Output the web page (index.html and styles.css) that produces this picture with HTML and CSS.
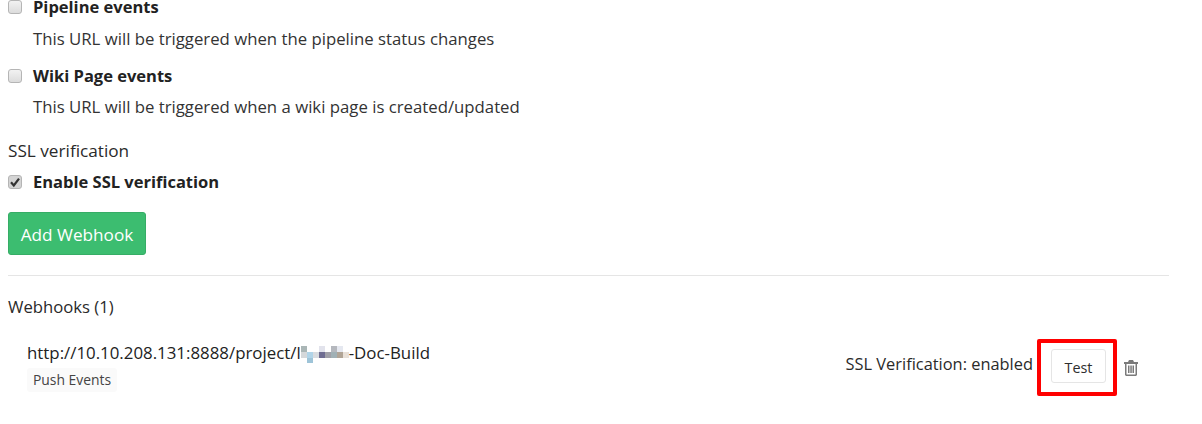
FILE: index.html
```html
<!DOCTYPE html>
<html lang="en">
<head>
<meta charset="utf-8">
<title>Webhooks</title>
<link rel="stylesheet" href="styles.css">
</head>
<body>
<main class="page">
  <div class="option">
    <label class="check-row"><span class="box"></span><strong>Pipeline events</strong></label>
    <p class="help">This URL will be triggered when the pipeline status changes</p>
  </div>
  <div class="option">
    <label class="check-row"><span class="box"></span><strong>Wiki Page events</strong></label>
    <p class="help tight">This URL will be triggered when a wiki page is created/updated</p>
  </div>
  <div class="ssl-title">SSL verification</div>
  <label class="check-row ssl-row"><span class="box checked"><svg viewBox="0 0 14 14" width="14" height="14"><path d="M3 7.200 5.800 10.400 11 3.600" fill="none" stroke="#333" stroke-width="2.200"/></svg></span><strong>Enable SSL verification</strong></label>
  <button class="add-btn" type="button">Add Webhook</button>
  <hr class="rule">
  <div class="list-title">Webhooks (1)</div>
  <div class="hook">
    <div class="hook-info">
      <div class="hook-url">http://10.10.208.131:8888/project/l<svg class="blur" width="48" height="18" viewBox="0 0 48 18"><rect x="0" y="0" width="6" height="6" fill="#aab6b6"/><rect x="18" y="0" width="6" height="6" fill="#e2e3ec"/><rect x="30" y="0" width="6" height="6" fill="#b5b8be"/><rect x="36" y="0" width="6" height="6" fill="#e5e8f0"/><rect x="0" y="6" width="6" height="6" fill="#d5d8da"/><rect x="6" y="6" width="6" height="6" fill="#b0d4e8"/><rect x="12" y="6" width="6" height="6" fill="#d8dce0"/><rect x="18" y="6" width="6" height="6" fill="#6f6d92"/><rect x="24" y="6" width="6" height="6" fill="#a0a0a8"/><rect x="30" y="6" width="6" height="6" fill="#a0b0b5"/><rect x="36" y="6" width="6" height="6" fill="#b0a496"/><rect x="42" y="6" width="6" height="6" fill="#e8e0d8"/><rect x="6" y="12" width="6" height="5" fill="#9ec4d8"/></svg>-Doc-Build</div>
      <span class="tag">Push Events</span>
    </div>
    <div class="hook-actions">
      <span class="ssl-status">SSL Verification: enabled</span>
      <span class="highlight"><button class="test-btn" type="button">Test</button></span>
      <svg class="trash" width="14" height="16" viewBox="0 0 14 16"><path fill="#7a7a7a" d="M5 0h4l1 2h4v2h-1v11l-1 1H2l-1-1V4H0V2h4zM2.500 4v10.500h9V4zM4 5.500h1.500v7.500H4zM6.300 5.500h1.500v7.500H6.300zM8.500 5.500H10v7.500H8.500z"/></svg>
    </div>
  </div>
</main>
</body>
</html>
```
FILE: styles.css
```css
* { box-sizing: border-box; }
html, body { margin: 0; padding: 0; }
body {
  height: 424px;
  overflow: hidden;
  background: #fff;
  color: #2a2a2a;
  font-family: "Open Sans", "Noto Sans", sans-serif;
  font-size: 16.7px;
  line-height: 22px;
}
.page { width: 1169px; margin-top: -4px; padding-left: 8px; }
.option { margin-bottom: 15px; }
.check-row { display: flex; align-items: center; height: 22px; }
.check-row strong { font-size: 16.500px; font-weight: 700; color: #222; }
.box {
  width: 14px; height: 14px; margin-right: 11px;
  border: 1px solid #b5b5b5; border-radius: 3px;
  background: linear-gradient(#f2f2f2, #dcdcdc);
  display: flex; flex: none;
}
.box.checked { background: #d4d4d4; }
.box.checked svg { margin: -1px; flex: none; }
.help { margin: 10px 0 0 25px; font-size: 16.750px; color: #333; }
.help.tight { margin-top: 9px; }
.ssl-title { margin-top: 22px; font-size: 17.200px; }
.ssl-row { margin-top: 9px; }
.add-btn {
  display: block; margin-top: 19px; padding: 2px 0 0;
  width: 138px; height: 43px;
  background: #3cbd70; color: #fff;
  border: 1px solid #36ad66; border-radius: 3px;
  font: inherit; font-size: 17.200px;
}
.rule { margin: 20px 0 0; border: 0; border-top: 1px solid #e5e5e5; }
.list-title { margin-top: 20px; }
.hook { display: flex; justify-content: space-between; align-items: flex-start; margin-top: 24px; padding: 0 31px 0 19px; }
.hook-url { font-size: 16.850px; color: #222; }
.blur { vertical-align: -5px; }
.tag {
  display: inline-block; margin-top: 4px; padding: 0 6px;
  height: 24px; font-size: 13.900px; line-height: 24px;
  background: #fafafa; border-radius: 3px; color: #444;
}
.hook-actions { display: flex; align-items: flex-start; margin-top: -3px; }
.ssl-status { margin-top: 14px; font-size: 16.400px; }
.highlight {
  display: flex; margin: 0 7px 0 4px;
  border: 4px solid #f00; border-radius: 2px; padding: 6px 7px 9px 10px;
}
.test-btn {
  width: 55px; height: 34px; padding: 4px 0 0;
  background: #fff; border: 1px solid #e5e5e5; border-radius: 3px;
  font: inherit; font-size: 14.400px; color: #2e2e2e;
}
.trash { margin-top: 21px; }
```
